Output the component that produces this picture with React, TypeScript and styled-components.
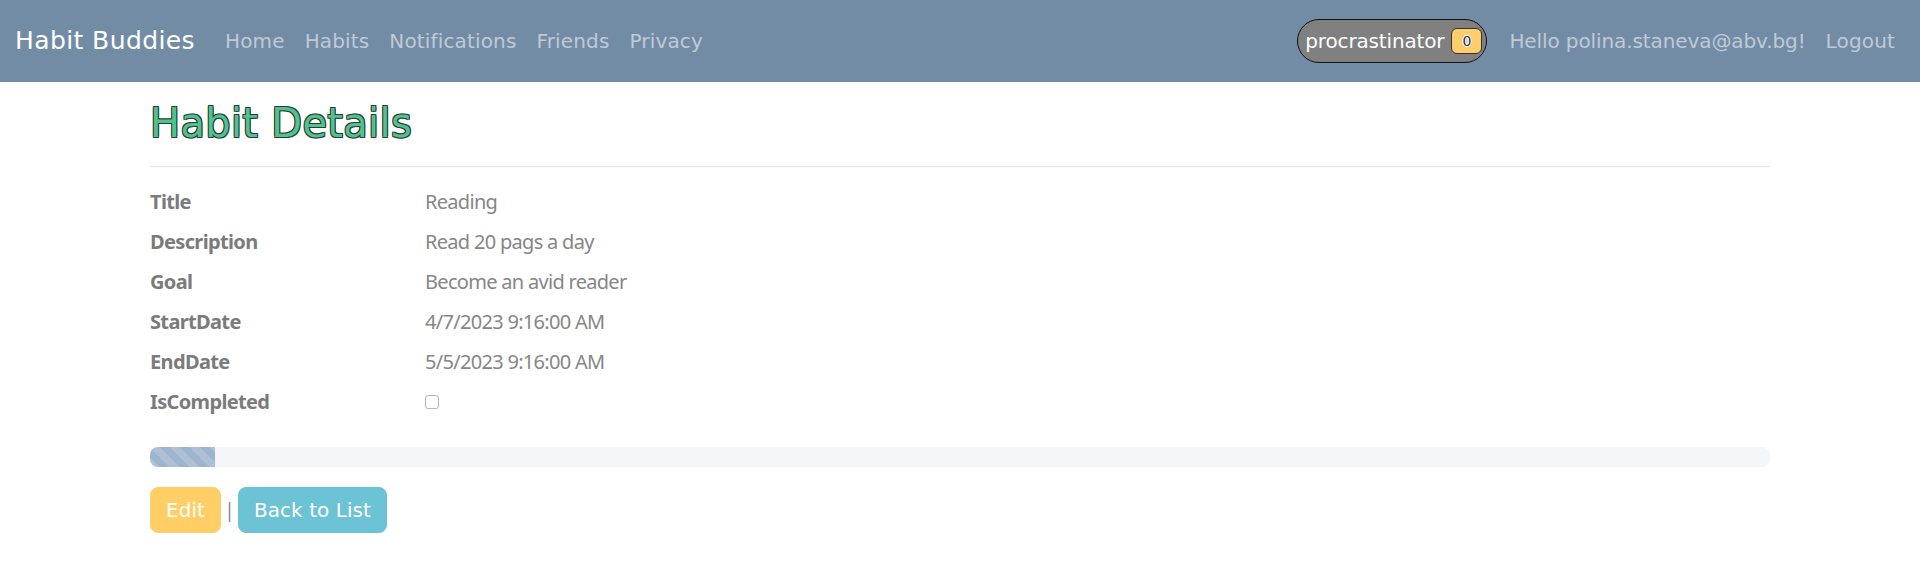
import styled, { createGlobalStyle } from "styled-components";

const GlobalStyle = createGlobalStyle`
  html, body {
    margin: 0;
    padding: 0;
    background: #fff;
  }
  body {
    font-family: "Noto Sans", "Open Sans", sans-serif;
    font-size: 20px;
    line-height: 1.5;
    color: #7a7a7a;
  }
  * {
    box-sizing: border-box;
  }
`;

const navFont = `"DejaVu Sans", "Liberation Sans", sans-serif`;

const Navbar = styled.nav`
  height: 82px;
  background: #738ca6;
  display: flex;
  align-items: center;
  padding: 0 15px;
  font-family: ${navFont};
`;

const Brand = styled.a`
  color: #fff;
  font-size: 25px;
  line-height: 1.5;
  margin-right: 20px;
  text-decoration: none;
  letter-spacing: 0.4px;
`;

const NavList = styled.div`
  display: flex;
  align-items: center;
`;

const NavLink = styled.a<{ $tight?: boolean }>`
  color: #bfcad6;
  font-size: 20px;
  line-height: 1.5;
  padding: 0 10px;
  text-decoration: none;
  letter-spacing: ${(p) => (p.$tight ? "-0.1px" : "0.15px")};
`;

const RightNav = styled(NavList)`
  margin-left: auto;
`;

const UserPill = styled.div`
  display: flex;
  align-items: center;
  gap: 7px;
  height: 44px;
  padding: 0 4px 0 7px;
  margin-right: 12px;
  background: #808080;
  border: 1px solid #111;
  border-radius: 22px;
  color: #fff;
  font-size: 20px;
  letter-spacing: -0.15px;
`;

const PointsBadge = styled.span`
  display: flex;
  align-items: center;
  justify-content: center;
  width: 31px;
  height: 26px;
  background: #ffcd69;
  border: 1px solid #333;
  border-radius: 6px;
  font-size: 14px;
  color: #1a2a6c;
  text-shadow: 1px 0 0 #fff, -1px 0 0 #fff, 0 1px 0 #fff, 0 -1px 0 #fff;
`;

const Container = styled.main`
  max-width: 1650px;
  margin: 0 auto;
  padding: 0 15px;
`;

const Heading = styled.h2`
  margin: 17px 0 0;
  font-family: ${navFont};
  font-weight: 500;
  font-size: 40px;
  line-height: 1.2;
  color: #4fc28e;
  letter-spacing: 0.3px;
  text-shadow: -1px -1px 0 #2e3b35, 1px -1px 0 #2e3b35, -1px 1px 0 #2e3b35,
    1px 1px 0 #2e3b35;
`;

const Rule = styled.hr`
  margin: 19px 0 20px;
  border: 0;
  border-top: 1px solid #e2e2e2;
`;

const DetailList = styled.dl`
  display: grid;
  grid-template-columns: 275px 1fr;
  margin: 0 0 20px;
`;

const Term = styled.dt`
  font-weight: bold;
  color: #7b7b7b;
  margin-bottom: 10px;
  letter-spacing: -0.65px;
`;

const Value = styled.dd`
  margin: 0 0 10px;
  color: #868686;
  letter-spacing: -0.7px;
`;

const CheckBox = styled.span`
  display: inline-block;
  width: 14px;
  height: 14px;
  margin-top: 8px;
  border: 1px solid #b5b5b5;
  border-radius: 3px;
  background: #fff;
  vertical-align: top;
`;

const Progress = styled.div`
  height: 20px;
  background: #f5f6f8;
  border-radius: 8px;
  overflow: hidden;
  display: flex;
  margin-bottom: 20px;
`;

const ProgressBar = styled.div`
  height: 100%;
  background-color: #9fb5ce;
  background-image: linear-gradient(
    45deg,
    rgba(255, 255, 255, 0.15) 25%,
    transparent 25%,
    transparent 50%,
    rgba(255, 255, 255, 0.15) 50%,
    rgba(255, 255, 255, 0.15) 75%,
    transparent 75%,
    transparent
  );
  background-size: 20px 20px;
`;

const Actions = styled.div`
  display: flex;
  align-items: center;
  gap: 3px;
`;

const Button = styled.a<{ $color: string }>`
  display: inline-block;
  padding: 7px 15px;
  font-family: ${navFont};
  font-size: 20px;
  line-height: 30px;
  color: #fff;
  background: ${(p) => p.$color};
  border: 1px solid ${(p) => p.$color};
  border-radius: 8px;
  text-decoration: none;
  letter-spacing: 0.05px;
`;

const Separator = styled.span`
  color: #8a8a8a;
  font-size: 20px;
`;

const details = [
  { label: "Title", value: "Reading" },
  { label: "Description", value: "Read 20 pags a day" },
  { label: "Goal", value: "Become an avid reader" },
  { label: "StartDate", value: "4/7/2023 9:16:00 AM" },
  { label: "EndDate", value: "5/5/2023 9:16:00 AM" },
];

export default function App() {
  const progress = 4;
  return (
    <>
      <GlobalStyle />
      <Navbar>
        <Brand href="#">Habit Buddies</Brand>
        <NavList>
          <NavLink href="#">Home</NavLink>
          <NavLink href="#">Habits</NavLink>
          <NavLink href="#">Notifications</NavLink>
          <NavLink href="#">Friends</NavLink>
          <NavLink href="#">Privacy</NavLink>
        </NavList>
        <RightNav>
          <UserPill>
            procrastinator
            <PointsBadge>0</PointsBadge>
          </UserPill>
          <NavLink href="#" $tight>
            Hello polina.staneva@abv.bg!
          </NavLink>
          <NavLink href="#">Logout</NavLink>
        </RightNav>
      </Navbar>
      <Container>
        <Heading>Habit Details</Heading>
        <Rule />
        <DetailList>
          {details.map((d) => (
            <>
              <Term key={d.label + "-t"}>{d.label}</Term>
              <Value key={d.label + "-v"}>{d.value}</Value>
            </>
          ))}
          <Term>IsCompleted</Term>
          <Value>
            <CheckBox />
          </Value>
        </DetailList>
        <Progress>
          <ProgressBar style={{ width: `${progress}%` }} />
        </Progress>
        <Actions>
          <Button href="#" $color="#ffce67">
            Edit
          </Button>
          <Separator>|</Separator>
          <Button href="#" $color="#6cc3d5">
            Back to List
          </Button>
        </Actions>
      </Container>
    </>
  );
}
